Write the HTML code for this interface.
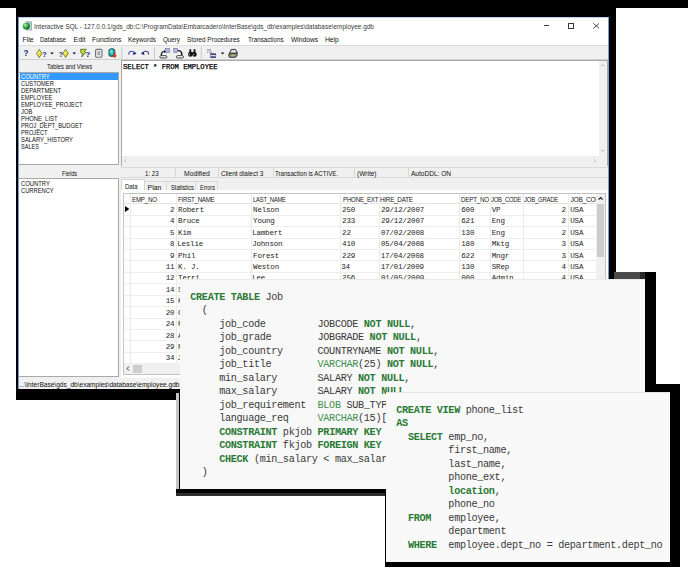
<!DOCTYPE html><html><head><meta charset="utf-8"><style>
*{margin:0;padding:0;box-sizing:border-box}
html,body{width:688px;height:580px;overflow:hidden;background:#fff}
body{position:relative;font-family:"Liberation Sans",sans-serif}
div,svg{position:absolute}
.t{white-space:pre;line-height:1}
.code{font-family:"Liberation Mono",monospace;white-space:pre;line-height:13.5px;color:#3a3a3a}
.k{color:#2a7a36;font-weight:bold}
.g{color:#3f8f4f}
</style></head><body>
<div style="left:0.00px;top:0.00px;width:688.00px;height:8.00px;background:#000"></div>
<div style="left:16.00px;top:0.00px;width:600.00px;height:400.00px;background:#000"></div>
<div style="left:18.00px;top:17.00px;width:591.00px;height:372.00px;background:#f0f0f0"></div>
<div style="left:18.00px;top:17.00px;width:591.00px;height:1.20px;background:#b9d1ee"></div>
<div style="left:18.00px;top:17.00px;width:1.00px;height:372.00px;background:#6f9fd8"></div>
<div style="left:608.00px;top:17.00px;width:1.00px;height:372.00px;background:#6f9fd8"></div>
<div style="left:18.00px;top:388.40px;width:591.00px;height:1.00px;background:#6f9fd8"></div>
<div style="left:19.00px;top:18.20px;width:589.00px;height:15.00px;background:#fff"></div>
<svg style="left:22px;top:21px" width="11" height="10" viewBox="0 0 11 10"><defs><radialGradient id="gb" cx="0.35" cy="0.35" r="0.7"><stop offset="0" stop-color="#b8f0b8"/><stop offset="0.55" stop-color="#2aa83a"/><stop offset="1" stop-color="#0d5e18"/></radialGradient></defs><rect x="4.5" y="0.8" width="5" height="8.2" fill="#c9d6e2" stroke="#7f93a6" stroke-width="0.7"/><rect x="5.6" y="2.5" width="2.8" height="0.7" fill="#7f93a6"/><rect x="5.6" y="4.5" width="2.8" height="0.7" fill="#7f93a6"/><circle cx="4.3" cy="5" r="3.6" fill="url(#gb)"/></svg>
<div id="t0" class="t" style="left:34.10px;top:23.08px;font-family:'Liberation Sans',sans-serif;font-size:7px;color:#3a3a3a;;transform:scaleX(0.9181);transform-origin:0 0;">Interactive SQL - 127.0.0.1/gds_db:C:\ProgramData\Embarcadero\InterBase\gds_db\examples\database\employee.gdb</div>
<div style="left:543.80px;top:25.40px;width:5.60px;height:0.95px;background:#3a3a3a"></div>
<div style="left:568.00px;top:23.20px;width:5.80px;height:5.40px;border:0.9px solid #3a3a3a"></div>
<svg style="left:592.6px;top:23.2px" width="6.6" height="5.8" viewBox="0 0 6.6 5.8"><path d="M0.3 0.3L6.3 5.5M6.3 0.3L0.3 5.5" stroke="#3a3a3a" stroke-width="0.9"/></svg>
<div style="left:19.00px;top:33.00px;width:589.00px;height:12.50px;background:#fff"></div>
<div id="t1" class="t" style="left:22.50px;top:37.25px;font-family:'Liberation Sans',sans-serif;font-size:6.8px;color:#111;;">File</div>
<div id="t2" class="t" style="left:40.00px;top:37.25px;font-family:'Liberation Sans',sans-serif;font-size:6.8px;color:#111;;transform:scaleX(0.8897);transform-origin:0 0;">Database</div>
<div id="t3" class="t" style="left:73.60px;top:37.25px;font-family:'Liberation Sans',sans-serif;font-size:6.8px;color:#111;;">Edit</div>
<div id="t4" class="t" style="left:92.00px;top:37.25px;font-family:'Liberation Sans',sans-serif;font-size:6.8px;color:#111;;">Functions</div>
<div id="t5" class="t" style="left:127.70px;top:37.25px;font-family:'Liberation Sans',sans-serif;font-size:6.8px;color:#111;;transform:scaleX(0.9333);transform-origin:0 0;">Keywords</div>
<div id="t6" class="t" style="left:162.90px;top:37.25px;font-family:'Liberation Sans',sans-serif;font-size:6.8px;color:#111;;transform:scaleX(0.9158);transform-origin:0 0;">Query</div>
<div id="t7" class="t" style="left:187.40px;top:37.25px;font-family:'Liberation Sans',sans-serif;font-size:6.8px;color:#111;;transform:scaleX(0.9289);transform-origin:0 0;">Stored Procedures</div>
<div id="t8" class="t" style="left:247.90px;top:37.25px;font-family:'Liberation Sans',sans-serif;font-size:6.8px;color:#111;;transform:scaleX(0.9205);transform-origin:0 0;">Transactions</div>
<div id="t9" class="t" style="left:291.40px;top:37.25px;font-family:'Liberation Sans',sans-serif;font-size:6.8px;color:#111;;transform:scaleX(0.9866);transform-origin:0 0;">Windows</div>
<div id="t10" class="t" style="left:325.40px;top:37.25px;font-family:'Liberation Sans',sans-serif;font-size:6.8px;color:#111;;transform:scaleX(0.9923);transform-origin:0 0;">Help</div>
<div style="left:19.00px;top:45.30px;width:589.00px;height:14.50px;background:#f0f0f0"></div>
<div style="left:19.00px;top:45.30px;width:589.00px;height:0.90px;background:#dcdcdc"></div>
<div style="left:19.00px;top:59.00px;width:589.00px;height:1.00px;background:#cfcfcf"></div>
<svg style="left:0;top:0" width="250" height="62" viewBox="0 0 250 62">
<defs>
<linearGradient id="ylw" x1="0" y1="0" x2="1" y2="1"><stop offset="0" stop-color="#ffff80"/><stop offset="1" stop-color="#d8d000"/></linearGradient>
<radialGradient id="teal" cx="0.4" cy="0.4" r="0.7"><stop offset="0" stop-color="#7ff0f0"/><stop offset="0.6" stop-color="#18a8a8"/><stop offset="1" stop-color="#0a5050"/></radialGradient>
</defs>
<!-- 1: help ? -->
<text x="23.6" y="55.8" font-family="Liberation Sans" font-weight="bold" font-size="8.2" fill="#1c2878">?</text>
<!-- 2: diamond + ? -->
<path d="M39.2 49.3L41.9 53.5L39.2 57.7L36.5 53.5Z" fill="url(#ylw)" stroke="#3a3a20" stroke-width="0.6"/>
<text x="42.3" y="56.5" font-family="Liberation Sans" font-weight="bold" font-size="7.2" fill="#1c2878">?</text>
<!-- 3: dropdown -->
<path d="M50.3 52.4L53.8 52.4L52.05 54.4Z" fill="#111"/>
<!-- 4: ? + diamond -->
<text x="58.8" y="56.5" font-family="Liberation Sans" font-weight="bold" font-size="7.2" fill="#1c2878">?</text>
<path d="M65.6 49.2L68.3 53.4L65.6 57.6L62.9 53.4Z" fill="url(#ylw)" stroke="#3a3a20" stroke-width="0.6"/>
<!-- 5: dropdown -->
<path d="M72.5 52.4L76 52.4L74.25 54.4Z" fill="#111"/>
<!-- 6: lightning + ? -->
<path d="M80.6 49.3L86.4 49.3L84.2 51.6L85.8 52.3L81.8 56.8L82.6 53.6L80.9 52.8Z" fill="#d0e020" stroke="#24502a" stroke-width="0.7"/>
<text x="85.6" y="56.8" font-family="Liberation Sans" font-weight="bold" font-size="7.8" fill="#1c2878">?</text>
<!-- 7: doc -->
<rect x="95.6" y="49.4" width="6.4" height="7.8" rx="1.3" fill="#f6f6f6" stroke="#6e6e6e" stroke-width="1.1"/>
<rect x="97.3" y="51.1" width="3" height="4.2" fill="#a8a8a8"/>
<!-- 8: db + red arrow -->
<path d="M108.9 50.2Q109.2 48.6 111.8 48.6Q114.6 48.6 114.8 50.2L114.8 55Q114.6 56.5 111.8 56.5Q109.2 56.5 108.9 55Z" fill="url(#teal)" stroke="#1a3535" stroke-width="0.7"/>
<path d="M113.9 52.2L115.5 52.2L115.5 55.3L116.9 55.3L114.7 58.3L112.5 55.3L113.9 55.3Z" fill="#d83a20"/>
<!-- sep -->
<rect x="121.4" y="47.3" width="0.9" height="11.5" fill="#c4c4c4"/>
<!-- 10: redo -->
<path d="M128.8 54.6Q128.6 50.8 132.2 51.3Q133.8 51.7 134.4 53.3" fill="none" stroke="#3a4a9a" stroke-width="1.1"/>
<path d="M133.2 54.6L135.9 53.6L134.6 52.1Z" fill="#101060" stroke="#101060" stroke-width="0.6"/>
<!-- 11: undo -->
<path d="M148.6 54.6Q148.8 50.8 145.2 51.3Q143.6 51.7 143 53.3" fill="none" stroke="#3a4a9a" stroke-width="1.1"/>
<path d="M144.2 54.6L141.5 53.6L142.8 52.1Z" fill="#101060" stroke="#101060" stroke-width="0.6"/>
<!-- sep -->
<rect x="154.1" y="47.3" width="0.9" height="11.5" fill="#c4c4c4"/>
<!-- 13: export -->
<rect x="165.6" y="48.6" width="3.9" height="3.9" fill="#b4b4ec" stroke="#5a5a7a" stroke-width="0.5"/>
<path d="M161.4 55.5Q161.1 51.6 164.4 51.5" fill="none" stroke="#111" stroke-width="1.2"/>
<path d="M164 50.1L165.9 51.5L164 52.9Z" fill="#111"/>
<rect x="159.9" y="55.7" width="6.9" height="2.3" rx="0.9" fill="#fff" stroke="#111" stroke-width="0.8"/>
<!-- 14: import -->
<rect x="173.8" y="48.6" width="3.9" height="3.9" fill="#b4b4ec" stroke="#5a5a7a" stroke-width="0.5"/>
<path d="M177.8 50.7Q181.9 50.6 181.7 54" fill="none" stroke="#111" stroke-width="1.2"/>
<path d="M180.3 53.7L183.1 53.7L181.7 55.5Z" fill="#111"/>
<rect x="176.4" y="55.7" width="7" height="2.3" rx="0.9" fill="#fff" stroke="#111" stroke-width="0.8"/>
<!-- 15: binoculars -->
<ellipse cx="190.3" cy="54.4" rx="2.2" ry="2.4" fill="#111"/>
<ellipse cx="194.5" cy="54.4" rx="2.2" ry="2.4" fill="#111"/>
<rect x="189.4" y="49.3" width="1.8" height="4.5" fill="#111"/>
<rect x="193.6" y="49.3" width="1.8" height="4.5" fill="#111"/>
<rect x="191" y="52.2" width="2.8" height="2.6" fill="#111"/>
<circle cx="189.6" cy="54.6" r="0.6" fill="#ddd"/>
<circle cx="193.8" cy="54.6" r="0.6" fill="#ddd"/>
<!-- sep -->
<rect x="200.8" y="47.3" width="0.9" height="11.5" fill="#c4c4c4"/>
<!-- 17: list -->
<rect x="207" y="49.5" width="4" height="0.8" fill="#666"/>
<rect x="207" y="51.7" width="1.2" height="0.8" fill="#666"/>
<rect x="209" y="51.7" width="3" height="0.8" fill="#666"/>
<rect x="210.3" y="53.3" width="5.6" height="1.6" fill="#2a3a8a"/>
<rect x="210.3" y="55" width="5.6" height="1.3" fill="#fff" stroke="#555" stroke-width="0.4"/>
<rect x="210.3" y="56.5" width="5.6" height="1.4" fill="#2a3a8a"/>
<!-- 18: dropdown -->
<path d="M220.8 52.4L224.3 52.4L222.55 54.4Z" fill="#111"/>
<!-- 19: printer -->
<path d="M229.2 53.8L231.2 49.6L235.2 49.2L237.4 52.4L236.9 56.2Q235.8 57.7 232.6 57.5L229.3 57.2L228.6 55Z" fill="#8c8c8c" stroke="#222" stroke-width="0.8"/>
<path d="M231.6 50.2L235 49.9L236.2 52.2L230.6 52.6Z" fill="#e8e8e8"/>
<path d="M229 53.6L237 53.2" stroke="#222" stroke-width="0.8"/>
<rect x="231.8" y="55" width="2.8" height="1" fill="#c8d010"/>
</svg>

<div style="left:19.00px;top:60.00px;width:100.50px;height:12.00px;background:#f0f0f0"></div>
<div id="t11" class="t" style="left:46.50px;top:63.50px;font-family:'Liberation Sans',sans-serif;font-size:6.5px;color:#111;;transform:scaleX(0.8960);transform-origin:0 0;">Tables and Views</div>
<div style="left:19.00px;top:71.60px;width:100.00px;height:93.80px;background:#fff;border:1px solid #a9a9a9;border-left:none"></div>
<div style="left:19.80px;top:72.80px;width:98.40px;height:6.90px;background:#3399ff"></div>
<div id="t12" class="t" style="left:20.80px;top:73.50px;font-family:'Liberation Sans',sans-serif;font-size:6.5px;color:#fff;;transform:scaleX(0.8937);transform-origin:0 0;">COUNTRY</div>
<div id="t13" class="t" style="left:20.80px;top:80.50px;font-family:'Liberation Sans',sans-serif;font-size:6.5px;color:#111;;transform:scaleX(0.8865);transform-origin:0 0;">CUSTOMER</div>
<div id="t14" class="t" style="left:20.80px;top:87.50px;font-family:'Liberation Sans',sans-serif;font-size:6.5px;color:#111;;transform:scaleX(0.9091);transform-origin:0 0;">DEPARTMENT</div>
<div id="t15" class="t" style="left:20.80px;top:94.50px;font-family:'Liberation Sans',sans-serif;font-size:6.5px;color:#111;;transform:scaleX(0.8771);transform-origin:0 0;">EMPLOYEE</div>
<div id="t16" class="t" style="left:20.80px;top:101.50px;font-family:'Liberation Sans',sans-serif;font-size:6.5px;color:#111;;transform:scaleX(0.8826);transform-origin:0 0;">EMPLOYEE_PROJECT</div>
<div id="t17" class="t" style="left:20.80px;top:108.50px;font-family:'Liberation Sans',sans-serif;font-size:6.5px;color:#111;;transform:scaleX(0.8917);transform-origin:0 0;">JOB</div>
<div id="t18" class="t" style="left:20.80px;top:115.50px;font-family:'Liberation Sans',sans-serif;font-size:6.5px;color:#111;;transform:scaleX(0.9025);transform-origin:0 0;">PHONE_LIST</div>
<div id="t19" class="t" style="left:20.80px;top:122.50px;font-family:'Liberation Sans',sans-serif;font-size:6.5px;color:#111;;transform:scaleX(0.8884);transform-origin:0 0;">PROJ_DEPT_BUDGET</div>
<div id="t20" class="t" style="left:20.80px;top:129.50px;font-family:'Liberation Sans',sans-serif;font-size:6.5px;color:#111;;transform:scaleX(0.8733);transform-origin:0 0;">PROJECT</div>
<div id="t21" class="t" style="left:20.80px;top:136.50px;font-family:'Liberation Sans',sans-serif;font-size:6.5px;color:#111;;transform:scaleX(0.8983);transform-origin:0 0;">SALARY_HISTORY</div>
<div id="t22" class="t" style="left:20.80px;top:143.50px;font-family:'Liberation Sans',sans-serif;font-size:6.5px;color:#111;;transform:scaleX(0.8524);transform-origin:0 0;">SALES</div>
<div id="t23" class="t" style="left:61.60px;top:170.50px;font-family:'Liberation Sans',sans-serif;font-size:6.5px;color:#111;;transform:scaleX(0.8765);transform-origin:0 0;">Fields</div>
<div style="left:19.00px;top:177.90px;width:100.00px;height:199.50px;background:#fff;border:1px solid #a9a9a9;border-left:none"></div>
<div id="t24" class="t" style="left:20.80px;top:180.50px;font-family:'Liberation Sans',sans-serif;font-size:6.5px;color:#111;;transform:scaleX(0.9000);transform-origin:0 0;">COUNTRY</div>
<div id="t25" class="t" style="left:20.80px;top:187.50px;font-family:'Liberation Sans',sans-serif;font-size:6.5px;color:#111;;transform:scaleX(0.8865);transform-origin:0 0;">CURRENCY</div>
<div style="left:120.60px;top:60.20px;width:487.60px;height:106.00px;background:#fff;border:1px solid #a9a9a9"></div>
<div id="t26" class="t" style="left:122.90px;top:64.33px;font-family:'Liberation Mono',monospace;font-size:7.4px;color:#000;-webkit-text-stroke:0.25px #000;transform:scaleX(0.9692);transform-origin:0 0;">SELECT * FROM EMPLOYEE</div>
<div style="left:599.40px;top:61.20px;width:7.40px;height:95.00px;background:#f0f0f0"></div>
<div style="left:121.60px;top:156.20px;width:477.80px;height:9.60px;background:#f0f0f0"></div>
<div style="left:599.40px;top:156.20px;width:7.40px;height:9.60px;background:#f0f0f0"></div>
<svg style="left:599.4px;top:61.2px" width="7.4" height="95" viewBox="0 0 7.4 95"><path d="M2.2 5L3.7 3.5L5.2 5M2.2 89L3.7 90.5L5.2 89" fill="none" stroke="#9a9a9a" stroke-width="0.7"/></svg>
<svg style="left:121.6px;top:156.2px" width="478" height="9.6" viewBox="0 0 478 9.6"><path d="M4 3.3L2.5 4.8L4 6.3M472 3.3L473.5 4.8L472 6.3" fill="none" stroke="#9a9a9a" stroke-width="0.7"/></svg>
<div style="left:120.00px;top:166.50px;width:488.00px;height:11.50px;background:#f0f0f0"></div>
<div style="left:120.00px;top:167.30px;width:488.00px;height:0.80px;background:#dadada"></div>
<div style="left:120.00px;top:177.20px;width:488.00px;height:0.80px;background:#dadada"></div>
<div style="left:175.00px;top:168.00px;width:0.80px;height:9.20px;background:#d6d6d6"></div>
<div style="left:218.20px;top:168.00px;width:0.80px;height:9.20px;background:#d6d6d6"></div>
<div style="left:272.70px;top:168.00px;width:0.80px;height:9.20px;background:#d6d6d6"></div>
<div style="left:354.00px;top:168.00px;width:0.80px;height:9.20px;background:#d6d6d6"></div>
<div style="left:408.10px;top:168.00px;width:0.80px;height:9.20px;background:#d6d6d6"></div>
<div id="t27" class="t" style="left:145.40px;top:171.25px;font-family:'Liberation Sans',sans-serif;font-size:6.8px;color:#111;;transform:scaleX(0.8961);transform-origin:0 0;">1: 23</div>
<div id="t28" class="t" style="left:184.00px;top:171.25px;font-family:'Liberation Sans',sans-serif;font-size:6.8px;color:#111;;">Modified</div>
<div id="t29" class="t" style="left:220.80px;top:171.25px;font-family:'Liberation Sans',sans-serif;font-size:6.8px;color:#111;;transform:scaleX(0.9502);transform-origin:0 0;">Client dialect 3</div>
<div id="t30" class="t" style="left:275.30px;top:171.25px;font-family:'Liberation Sans',sans-serif;font-size:6.8px;color:#111;;transform:scaleX(0.9016);transform-origin:0 0;">Transaction is ACTIVE.</div>
<div id="t31" class="t" style="left:357.00px;top:171.25px;font-family:'Liberation Sans',sans-serif;font-size:6.8px;color:#111;;transform:scaleX(0.9650);transform-origin:0 0;">(Write)</div>
<div id="t32" class="t" style="left:410.50px;top:171.25px;font-family:'Liberation Sans',sans-serif;font-size:6.8px;color:#111;;transform:scaleX(0.9634);transform-origin:0 0;">AutoDDL: ON</div>
<div style="left:120.00px;top:178.00px;width:488.00px;height:12.50px;background:#f0f0f0"></div>
<div style="left:121.00px;top:179.30px;width:24.00px;height:11.50px;background:#fff;border:0.8px solid #d4d4d4;border-bottom:none"></div>
<div style="left:145.00px;top:180.60px;width:21.50px;height:9.60px;background:#f0f0f0;border:0.8px solid #d9d9d9;border-left:none;border-bottom:none"></div>
<div style="left:166.50px;top:180.60px;width:29.00px;height:9.60px;background:#f0f0f0;border:0.8px solid #d9d9d9;border-left:none;border-bottom:none"></div>
<div style="left:195.50px;top:180.60px;width:22.70px;height:9.60px;background:#f0f0f0;border:0.8px solid #d9d9d9;border-left:none;border-bottom:none"></div>
<div id="t33" class="t" style="left:125.10px;top:184.25px;font-family:'Liberation Sans',sans-serif;font-size:6.8px;color:#111;;transform:scaleX(0.8733);transform-origin:0 0;">Data</div>
<div id="t34" class="t" style="left:147.60px;top:185.25px;font-family:'Liberation Sans',sans-serif;font-size:6.8px;color:#111;;">Plan</div>
<div id="t35" class="t" style="left:170.60px;top:185.25px;font-family:'Liberation Sans',sans-serif;font-size:6.8px;color:#111;;transform:scaleX(0.8444);transform-origin:0 0;">Statistics</div>
<div id="t36" class="t" style="left:200.00px;top:185.25px;font-family:'Liberation Sans',sans-serif;font-size:6.8px;color:#111;;transform:scaleX(0.8056);transform-origin:0 0;">Errors</div>
<div style="left:120.50px;top:190.00px;width:487.50px;height:188.00px;background:#fff"></div>
<div style="left:122.80px;top:193.20px;width:483.20px;height:181.50px;background:#fff;border:0.9px solid #c4c4c4"></div>
<div style="left:123.50px;top:203.30px;width:473.00px;height:0.90px;background:#e4e4e4"></div>
<div style="left:123.50px;top:214.81px;width:473.00px;height:0.90px;background:#eeeeee"></div>
<div style="left:123.50px;top:226.22px;width:473.00px;height:0.90px;background:#eeeeee"></div>
<div style="left:123.50px;top:237.63px;width:473.00px;height:0.90px;background:#eeeeee"></div>
<div style="left:123.50px;top:249.04px;width:473.00px;height:0.90px;background:#eeeeee"></div>
<div style="left:123.50px;top:260.45px;width:473.00px;height:0.90px;background:#eeeeee"></div>
<div style="left:123.50px;top:271.86px;width:473.00px;height:0.90px;background:#eeeeee"></div>
<div style="left:123.50px;top:283.27px;width:473.00px;height:0.90px;background:#eeeeee"></div>
<div style="left:123.50px;top:294.68px;width:473.00px;height:0.90px;background:#eeeeee"></div>
<div style="left:123.50px;top:306.09px;width:473.00px;height:0.90px;background:#eeeeee"></div>
<div style="left:123.50px;top:317.50px;width:473.00px;height:0.90px;background:#eeeeee"></div>
<div style="left:123.50px;top:328.91px;width:473.00px;height:0.90px;background:#eeeeee"></div>
<div style="left:123.50px;top:340.32px;width:473.00px;height:0.90px;background:#eeeeee"></div>
<div style="left:123.50px;top:351.73px;width:473.00px;height:0.90px;background:#eeeeee"></div>
<div style="left:123.50px;top:363.14px;width:473.00px;height:0.90px;background:#eeeeee"></div>
<div style="left:130.10px;top:193.50px;width:0.80px;height:170.00px;background:#ebebeb"></div>
<div style="left:175.80px;top:193.50px;width:0.80px;height:170.00px;background:#ebebeb"></div>
<div style="left:250.80px;top:193.50px;width:0.80px;height:170.00px;background:#ebebeb"></div>
<div style="left:339.80px;top:193.50px;width:0.80px;height:170.00px;background:#ebebeb"></div>
<div style="left:378.60px;top:193.50px;width:0.80px;height:170.00px;background:#ebebeb"></div>
<div style="left:459.00px;top:193.50px;width:0.80px;height:170.00px;background:#ebebeb"></div>
<div style="left:489.50px;top:193.50px;width:0.80px;height:170.00px;background:#ebebeb"></div>
<div style="left:522.60px;top:193.50px;width:0.80px;height:170.00px;background:#ebebeb"></div>
<div style="left:568.00px;top:193.50px;width:0.80px;height:170.00px;background:#ebebeb"></div>
<div style="left:123.3px;top:193.5px;width:473.3px;height:169.5px;overflow:hidden">
<div id="t37" class="t" style="left:8.30px;top:3.92px;font-family:'Liberation Sans',sans-serif;font-size:6.6px;color:#222;letter-spacing:-0.25px;transform:scaleX(0.9385);transform-origin:0 0;">EMP_NO</div>
<div id="t38" class="t" style="left:54.60px;top:3.92px;font-family:'Liberation Sans',sans-serif;font-size:6.6px;color:#222;letter-spacing:-0.25px;transform:scaleX(0.9256);transform-origin:0 0;">FIRST_NAME</div>
<div id="t39" class="t" style="left:129.50px;top:3.92px;font-family:'Liberation Sans',sans-serif;font-size:6.6px;color:#222;letter-spacing:-0.25px;transform:scaleX(0.8873);transform-origin:0 0;">LAST_NAME</div>
<div id="t40" class="t" style="left:219.30px;top:3.92px;font-family:'Liberation Sans',sans-serif;font-size:6.6px;color:#222;letter-spacing:-0.25px;transform:scaleX(0.9351);transform-origin:0 0;">PHONE_EXT</div>
<div id="t41" class="t" style="left:257.20px;top:3.92px;font-family:'Liberation Sans',sans-serif;font-size:6.6px;color:#222;letter-spacing:-0.25px;transform:scaleX(0.9559);transform-origin:0 0;">HIRE_DATE</div>
<div id="t42" class="t" style="left:337.80px;top:3.92px;font-family:'Liberation Sans',sans-serif;font-size:6.6px;color:#222;letter-spacing:-0.25px;transform:scaleX(0.9473);transform-origin:0 0;">DEPT_NO</div>
<div id="t43" class="t" style="left:367.70px;top:3.92px;font-family:'Liberation Sans',sans-serif;font-size:6.6px;color:#222;letter-spacing:-0.25px;transform:scaleX(0.8971);transform-origin:0 0;">JOB_CODE</div>
<div id="t44" class="t" style="left:401.00px;top:3.92px;font-family:'Liberation Sans',sans-serif;font-size:6.6px;color:#222;letter-spacing:-0.25px;transform:scaleX(0.9026);transform-origin:0 0;">JOB_GRADE</div>
<div id="t45" class="t" style="left:447.20px;top:3.92px;font-family:'Liberation Sans',sans-serif;font-size:6.6px;color:#222;letter-spacing:-0.25px;">JOB_COUNTRY</div>
<div id="t46" class="t" style="left:46.69px;top:13.75px;font-family:'Liberation Mono',monospace;font-size:7.5px;color:#1e1e1e;letter-spacing:-0.19px;">2</div>
<div id="t47" class="t" style="left:54.80px;top:13.75px;font-family:'Liberation Mono',monospace;font-size:7.5px;color:#1e1e1e;letter-spacing:-0.19px;">Robert</div>
<div id="t48" class="t" style="left:129.80px;top:13.75px;font-family:'Liberation Mono',monospace;font-size:7.5px;color:#1e1e1e;letter-spacing:-0.19px;">Nelson</div>
<div id="t49" class="t" style="left:218.80px;top:13.75px;font-family:'Liberation Mono',monospace;font-size:7.5px;color:#1e1e1e;letter-spacing:-0.19px;">250</div>
<div id="t50" class="t" style="left:257.60px;top:13.75px;font-family:'Liberation Mono',monospace;font-size:7.5px;color:#1e1e1e;letter-spacing:-0.19px;">29/12/2007</div>
<div id="t51" class="t" style="left:338.00px;top:13.75px;font-family:'Liberation Mono',monospace;font-size:7.5px;color:#1e1e1e;letter-spacing:-0.19px;">600</div>
<div id="t52" class="t" style="left:368.50px;top:13.75px;font-family:'Liberation Mono',monospace;font-size:7.5px;color:#1e1e1e;letter-spacing:-0.19px;">VP</div>
<div id="t53" class="t" style="left:438.08px;top:13.75px;font-family:'Liberation Mono',monospace;font-size:7.5px;color:#1e1e1e;letter-spacing:-0.19px;">2</div>
<div id="t54" class="t" style="left:447.00px;top:13.75px;font-family:'Liberation Mono',monospace;font-size:7.5px;color:#1e1e1e;letter-spacing:-0.19px;">USA</div>
<div id="t55" class="t" style="left:46.69px;top:24.75px;font-family:'Liberation Mono',monospace;font-size:7.5px;color:#1e1e1e;letter-spacing:-0.19px;">4</div>
<div id="t56" class="t" style="left:54.80px;top:24.75px;font-family:'Liberation Mono',monospace;font-size:7.5px;color:#1e1e1e;letter-spacing:-0.19px;">Bruce</div>
<div id="t57" class="t" style="left:129.80px;top:24.75px;font-family:'Liberation Mono',monospace;font-size:7.5px;color:#1e1e1e;letter-spacing:-0.19px;">Young</div>
<div id="t58" class="t" style="left:218.80px;top:24.75px;font-family:'Liberation Mono',monospace;font-size:7.5px;color:#1e1e1e;letter-spacing:-0.19px;">233</div>
<div id="t59" class="t" style="left:257.60px;top:24.75px;font-family:'Liberation Mono',monospace;font-size:7.5px;color:#1e1e1e;letter-spacing:-0.19px;">29/12/2007</div>
<div id="t60" class="t" style="left:338.00px;top:24.75px;font-family:'Liberation Mono',monospace;font-size:7.5px;color:#1e1e1e;letter-spacing:-0.19px;">621</div>
<div id="t61" class="t" style="left:368.50px;top:24.75px;font-family:'Liberation Mono',monospace;font-size:7.5px;color:#1e1e1e;letter-spacing:-0.19px;">Eng</div>
<div id="t62" class="t" style="left:438.08px;top:24.75px;font-family:'Liberation Mono',monospace;font-size:7.5px;color:#1e1e1e;letter-spacing:-0.19px;">2</div>
<div id="t63" class="t" style="left:447.00px;top:24.75px;font-family:'Liberation Mono',monospace;font-size:7.5px;color:#1e1e1e;letter-spacing:-0.19px;">USA</div>
<div id="t64" class="t" style="left:46.69px;top:36.76px;font-family:'Liberation Mono',monospace;font-size:7.5px;color:#1e1e1e;letter-spacing:-0.19px;">5</div>
<div id="t65" class="t" style="left:54.80px;top:36.76px;font-family:'Liberation Mono',monospace;font-size:7.5px;color:#1e1e1e;letter-spacing:-0.19px;">Kim</div>
<div id="t66" class="t" style="left:128.90px;top:36.76px;font-family:'Liberation Mono',monospace;font-size:7.5px;color:#1e1e1e;letter-spacing:-0.19px;">Lambert</div>
<div id="t67" class="t" style="left:218.80px;top:36.76px;font-family:'Liberation Mono',monospace;font-size:7.5px;color:#1e1e1e;letter-spacing:-0.19px;">22</div>
<div id="t68" class="t" style="left:257.60px;top:36.76px;font-family:'Liberation Mono',monospace;font-size:7.5px;color:#1e1e1e;letter-spacing:-0.19px;">07/02/2008</div>
<div id="t69" class="t" style="left:338.00px;top:36.76px;font-family:'Liberation Mono',monospace;font-size:7.5px;color:#1e1e1e;letter-spacing:-0.19px;">130</div>
<div id="t70" class="t" style="left:368.50px;top:36.76px;font-family:'Liberation Mono',monospace;font-size:7.5px;color:#1e1e1e;letter-spacing:-0.19px;">Eng</div>
<div id="t71" class="t" style="left:438.08px;top:36.76px;font-family:'Liberation Mono',monospace;font-size:7.5px;color:#1e1e1e;letter-spacing:-0.19px;">2</div>
<div id="t72" class="t" style="left:447.00px;top:36.76px;font-family:'Liberation Mono',monospace;font-size:7.5px;color:#1e1e1e;letter-spacing:-0.19px;">USA</div>
<div id="t73" class="t" style="left:46.69px;top:47.76px;font-family:'Liberation Mono',monospace;font-size:7.5px;color:#1e1e1e;letter-spacing:-0.19px;">8</div>
<div id="t74" class="t" style="left:53.90px;top:47.76px;font-family:'Liberation Mono',monospace;font-size:7.5px;color:#1e1e1e;letter-spacing:-0.19px;">Leslie</div>
<div id="t75" class="t" style="left:128.90px;top:47.76px;font-family:'Liberation Mono',monospace;font-size:7.5px;color:#1e1e1e;letter-spacing:-0.19px;">Johnson</div>
<div id="t76" class="t" style="left:218.80px;top:47.76px;font-family:'Liberation Mono',monospace;font-size:7.5px;color:#1e1e1e;letter-spacing:-0.19px;">410</div>
<div id="t77" class="t" style="left:257.60px;top:47.76px;font-family:'Liberation Mono',monospace;font-size:7.5px;color:#1e1e1e;letter-spacing:-0.19px;">05/04/2008</div>
<div id="t78" class="t" style="left:338.00px;top:47.76px;font-family:'Liberation Mono',monospace;font-size:7.5px;color:#1e1e1e;letter-spacing:-0.19px;">180</div>
<div id="t79" class="t" style="left:368.50px;top:47.76px;font-family:'Liberation Mono',monospace;font-size:7.5px;color:#1e1e1e;letter-spacing:-0.19px;">Mktg</div>
<div id="t80" class="t" style="left:438.08px;top:47.76px;font-family:'Liberation Mono',monospace;font-size:7.5px;color:#1e1e1e;letter-spacing:-0.19px;">3</div>
<div id="t81" class="t" style="left:447.00px;top:47.76px;font-family:'Liberation Mono',monospace;font-size:7.5px;color:#1e1e1e;letter-spacing:-0.19px;">USA</div>
<div id="t82" class="t" style="left:46.69px;top:59.76px;font-family:'Liberation Mono',monospace;font-size:7.5px;color:#1e1e1e;letter-spacing:-0.19px;">9</div>
<div id="t83" class="t" style="left:54.80px;top:59.76px;font-family:'Liberation Mono',monospace;font-size:7.5px;color:#1e1e1e;letter-spacing:-0.19px;">Phil</div>
<div id="t84" class="t" style="left:129.80px;top:59.76px;font-family:'Liberation Mono',monospace;font-size:7.5px;color:#1e1e1e;letter-spacing:-0.19px;">Forest</div>
<div id="t85" class="t" style="left:218.80px;top:59.76px;font-family:'Liberation Mono',monospace;font-size:7.5px;color:#1e1e1e;letter-spacing:-0.19px;">229</div>
<div id="t86" class="t" style="left:257.40px;top:59.76px;font-family:'Liberation Mono',monospace;font-size:7.5px;color:#1e1e1e;letter-spacing:-0.19px;">17/04/2008</div>
<div id="t87" class="t" style="left:338.00px;top:59.76px;font-family:'Liberation Mono',monospace;font-size:7.5px;color:#1e1e1e;letter-spacing:-0.19px;">622</div>
<div id="t88" class="t" style="left:368.50px;top:59.76px;font-family:'Liberation Mono',monospace;font-size:7.5px;color:#1e1e1e;letter-spacing:-0.19px;">Mngr</div>
<div id="t89" class="t" style="left:438.08px;top:59.76px;font-family:'Liberation Mono',monospace;font-size:7.5px;color:#1e1e1e;letter-spacing:-0.19px;">3</div>
<div id="t90" class="t" style="left:447.00px;top:59.76px;font-family:'Liberation Mono',monospace;font-size:7.5px;color:#1e1e1e;letter-spacing:-0.19px;">USA</div>
<div id="t91" class="t" style="left:42.38px;top:70.75px;font-family:'Liberation Mono',monospace;font-size:7.5px;color:#1e1e1e;letter-spacing:-0.19px;">11</div>
<div id="t92" class="t" style="left:54.80px;top:70.75px;font-family:'Liberation Mono',monospace;font-size:7.5px;color:#1e1e1e;letter-spacing:-0.19px;">K. J.</div>
<div id="t93" class="t" style="left:129.80px;top:70.75px;font-family:'Liberation Mono',monospace;font-size:7.5px;color:#1e1e1e;letter-spacing:-0.19px;">Weston</div>
<div id="t94" class="t" style="left:217.90px;top:70.75px;font-family:'Liberation Mono',monospace;font-size:7.5px;color:#1e1e1e;letter-spacing:-0.19px;">34</div>
<div id="t95" class="t" style="left:257.40px;top:70.75px;font-family:'Liberation Mono',monospace;font-size:7.5px;color:#1e1e1e;letter-spacing:-0.19px;">17/01/2009</div>
<div id="t96" class="t" style="left:338.00px;top:70.75px;font-family:'Liberation Mono',monospace;font-size:7.5px;color:#1e1e1e;letter-spacing:-0.19px;">130</div>
<div id="t97" class="t" style="left:368.50px;top:70.75px;font-family:'Liberation Mono',monospace;font-size:7.5px;color:#1e1e1e;letter-spacing:-0.19px;">SRep</div>
<div id="t98" class="t" style="left:438.08px;top:70.75px;font-family:'Liberation Mono',monospace;font-size:7.5px;color:#1e1e1e;letter-spacing:-0.19px;">4</div>
<div id="t99" class="t" style="left:447.00px;top:70.75px;font-family:'Liberation Mono',monospace;font-size:7.5px;color:#1e1e1e;letter-spacing:-0.19px;">USA</div>
<div id="t100" class="t" style="left:42.38px;top:81.75px;font-family:'Liberation Mono',monospace;font-size:7.5px;color:#1e1e1e;letter-spacing:-0.19px;">12</div>
<div id="t101" class="t" style="left:54.80px;top:81.75px;font-family:'Liberation Mono',monospace;font-size:7.5px;color:#1e1e1e;letter-spacing:-0.19px;">Terri</div>
<div id="t102" class="t" style="left:128.90px;top:81.75px;font-family:'Liberation Mono',monospace;font-size:7.5px;color:#1e1e1e;letter-spacing:-0.19px;">Lee</div>
<div id="t103" class="t" style="left:218.80px;top:81.75px;font-family:'Liberation Mono',monospace;font-size:7.5px;color:#1e1e1e;letter-spacing:-0.19px;">256</div>
<div id="t104" class="t" style="left:257.60px;top:81.75px;font-family:'Liberation Mono',monospace;font-size:7.5px;color:#1e1e1e;letter-spacing:-0.19px;">01/05/2009</div>
<div id="t105" class="t" style="left:338.00px;top:81.75px;font-family:'Liberation Mono',monospace;font-size:7.5px;color:#1e1e1e;letter-spacing:-0.19px;">000</div>
<div id="t106" class="t" style="left:368.50px;top:81.75px;font-family:'Liberation Mono',monospace;font-size:7.5px;color:#1e1e1e;letter-spacing:-0.19px;">Admin</div>
<div id="t107" class="t" style="left:438.08px;top:81.75px;font-family:'Liberation Mono',monospace;font-size:7.5px;color:#1e1e1e;letter-spacing:-0.19px;">4</div>
<div id="t108" class="t" style="left:447.00px;top:81.75px;font-family:'Liberation Mono',monospace;font-size:7.5px;color:#1e1e1e;letter-spacing:-0.19px;">USA</div>
<div id="t109" class="t" style="left:42.38px;top:93.75px;font-family:'Liberation Mono',monospace;font-size:7.5px;color:#1e1e1e;letter-spacing:-0.19px;">14</div>
<div id="t110" class="t" style="left:54.80px;top:93.75px;font-family:'Liberation Mono',monospace;font-size:7.5px;color:#1e1e1e;letter-spacing:-0.19px;">Stewart</div>
<div id="t111" class="t" style="left:129.80px;top:93.75px;font-family:'Liberation Mono',monospace;font-size:7.5px;color:#1e1e1e;letter-spacing:-0.19px;">Hall</div>
<div id="t112" class="t" style="left:218.80px;top:93.75px;font-family:'Liberation Mono',monospace;font-size:7.5px;color:#1e1e1e;letter-spacing:-0.19px;">227</div>
<div id="t113" class="t" style="left:257.60px;top:93.75px;font-family:'Liberation Mono',monospace;font-size:7.5px;color:#1e1e1e;letter-spacing:-0.19px;">04/06/2009</div>
<div id="t114" class="t" style="left:338.00px;top:93.75px;font-family:'Liberation Mono',monospace;font-size:7.5px;color:#1e1e1e;letter-spacing:-0.19px;">900</div>
<div id="t115" class="t" style="left:368.50px;top:93.75px;font-family:'Liberation Mono',monospace;font-size:7.5px;color:#1e1e1e;letter-spacing:-0.19px;">Finan</div>
<div id="t116" class="t" style="left:438.08px;top:93.75px;font-family:'Liberation Mono',monospace;font-size:7.5px;color:#1e1e1e;letter-spacing:-0.19px;">3</div>
<div id="t117" class="t" style="left:447.00px;top:93.75px;font-family:'Liberation Mono',monospace;font-size:7.5px;color:#1e1e1e;letter-spacing:-0.19px;">USA</div>
<div id="t118" class="t" style="left:42.38px;top:104.75px;font-family:'Liberation Mono',monospace;font-size:7.5px;color:#1e1e1e;letter-spacing:-0.19px;">15</div>
<div id="t119" class="t" style="left:54.80px;top:104.75px;font-family:'Liberation Mono',monospace;font-size:7.5px;color:#1e1e1e;letter-spacing:-0.19px;">Katherine</div>
<div id="t120" class="t" style="left:129.80px;top:104.75px;font-family:'Liberation Mono',monospace;font-size:7.5px;color:#1e1e1e;letter-spacing:-0.19px;">Young</div>
<div id="t121" class="t" style="left:218.80px;top:104.75px;font-family:'Liberation Mono',monospace;font-size:7.5px;color:#1e1e1e;letter-spacing:-0.19px;">231</div>
<div id="t122" class="t" style="left:257.40px;top:104.75px;font-family:'Liberation Mono',monospace;font-size:7.5px;color:#1e1e1e;letter-spacing:-0.19px;">14/06/2009</div>
<div id="t123" class="t" style="left:338.00px;top:104.75px;font-family:'Liberation Mono',monospace;font-size:7.5px;color:#1e1e1e;letter-spacing:-0.19px;">623</div>
<div id="t124" class="t" style="left:368.50px;top:104.75px;font-family:'Liberation Mono',monospace;font-size:7.5px;color:#1e1e1e;letter-spacing:-0.19px;">Mngr</div>
<div id="t125" class="t" style="left:438.08px;top:104.75px;font-family:'Liberation Mono',monospace;font-size:7.5px;color:#1e1e1e;letter-spacing:-0.19px;">3</div>
<div id="t126" class="t" style="left:447.00px;top:104.75px;font-family:'Liberation Mono',monospace;font-size:7.5px;color:#1e1e1e;letter-spacing:-0.19px;">USA</div>
<div id="t127" class="t" style="left:42.38px;top:116.75px;font-family:'Liberation Mono',monospace;font-size:7.5px;color:#1e1e1e;letter-spacing:-0.19px;">20</div>
<div id="t128" class="t" style="left:54.80px;top:116.75px;font-family:'Liberation Mono',monospace;font-size:7.5px;color:#1e1e1e;letter-spacing:-0.19px;">Chris</div>
<div id="t129" class="t" style="left:129.80px;top:116.75px;font-family:'Liberation Mono',monospace;font-size:7.5px;color:#1e1e1e;letter-spacing:-0.19px;">Papadopoulos</div>
<div id="t130" class="t" style="left:218.80px;top:116.75px;font-family:'Liberation Mono',monospace;font-size:7.5px;color:#1e1e1e;letter-spacing:-0.19px;">887</div>
<div id="t131" class="t" style="left:257.60px;top:116.75px;font-family:'Liberation Mono',monospace;font-size:7.5px;color:#1e1e1e;letter-spacing:-0.19px;">01/01/2010</div>
<div id="t132" class="t" style="left:338.00px;top:116.75px;font-family:'Liberation Mono',monospace;font-size:7.5px;color:#1e1e1e;letter-spacing:-0.19px;">671</div>
<div id="t133" class="t" style="left:368.50px;top:116.75px;font-family:'Liberation Mono',monospace;font-size:7.5px;color:#1e1e1e;letter-spacing:-0.19px;">Mngr</div>
<div id="t134" class="t" style="left:438.08px;top:116.75px;font-family:'Liberation Mono',monospace;font-size:7.5px;color:#1e1e1e;letter-spacing:-0.19px;">3</div>
<div id="t135" class="t" style="left:447.00px;top:116.75px;font-family:'Liberation Mono',monospace;font-size:7.5px;color:#1e1e1e;letter-spacing:-0.19px;">USA</div>
<div id="t136" class="t" style="left:42.38px;top:127.75px;font-family:'Liberation Mono',monospace;font-size:7.5px;color:#1e1e1e;letter-spacing:-0.19px;">24</div>
<div id="t137" class="t" style="left:54.80px;top:127.75px;font-family:'Liberation Mono',monospace;font-size:7.5px;color:#1e1e1e;letter-spacing:-0.19px;">Pete</div>
<div id="t138" class="t" style="left:129.80px;top:127.75px;font-family:'Liberation Mono',monospace;font-size:7.5px;color:#1e1e1e;letter-spacing:-0.19px;">Fisher</div>
<div id="t139" class="t" style="left:218.80px;top:127.75px;font-family:'Liberation Mono',monospace;font-size:7.5px;color:#1e1e1e;letter-spacing:-0.19px;">888</div>
<div id="t140" class="t" style="left:257.40px;top:127.75px;font-family:'Liberation Mono',monospace;font-size:7.5px;color:#1e1e1e;letter-spacing:-0.19px;">12/09/2010</div>
<div id="t141" class="t" style="left:338.00px;top:127.75px;font-family:'Liberation Mono',monospace;font-size:7.5px;color:#1e1e1e;letter-spacing:-0.19px;">671</div>
<div id="t142" class="t" style="left:368.50px;top:127.75px;font-family:'Liberation Mono',monospace;font-size:7.5px;color:#1e1e1e;letter-spacing:-0.19px;">Eng</div>
<div id="t143" class="t" style="left:438.08px;top:127.75px;font-family:'Liberation Mono',monospace;font-size:7.5px;color:#1e1e1e;letter-spacing:-0.19px;">3</div>
<div id="t144" class="t" style="left:447.00px;top:127.75px;font-family:'Liberation Mono',monospace;font-size:7.5px;color:#1e1e1e;letter-spacing:-0.19px;">USA</div>
<div id="t145" class="t" style="left:42.38px;top:139.75px;font-family:'Liberation Mono',monospace;font-size:7.5px;color:#1e1e1e;letter-spacing:-0.19px;">28</div>
<div id="t146" class="t" style="left:54.80px;top:139.75px;font-family:'Liberation Mono',monospace;font-size:7.5px;color:#1e1e1e;letter-spacing:-0.19px;">Ann</div>
<div id="t147" class="t" style="left:129.80px;top:139.75px;font-family:'Liberation Mono',monospace;font-size:7.5px;color:#1e1e1e;letter-spacing:-0.19px;">Bennet</div>
<div id="t148" class="t" style="left:218.80px;top:139.75px;font-family:'Liberation Mono',monospace;font-size:7.5px;color:#1e1e1e;letter-spacing:-0.19px;">5</div>
<div id="t149" class="t" style="left:257.60px;top:139.75px;font-family:'Liberation Mono',monospace;font-size:7.5px;color:#1e1e1e;letter-spacing:-0.19px;">01/02/2011</div>
<div id="t150" class="t" style="left:338.00px;top:139.75px;font-family:'Liberation Mono',monospace;font-size:7.5px;color:#1e1e1e;letter-spacing:-0.19px;">120</div>
<div id="t151" class="t" style="left:368.50px;top:139.75px;font-family:'Liberation Mono',monospace;font-size:7.5px;color:#1e1e1e;letter-spacing:-0.19px;">Admn</div>
<div id="t152" class="t" style="left:438.08px;top:139.75px;font-family:'Liberation Mono',monospace;font-size:7.5px;color:#1e1e1e;letter-spacing:-0.19px;">5</div>
<div id="t153" class="t" style="left:447.00px;top:139.75px;font-family:'Liberation Mono',monospace;font-size:7.5px;color:#1e1e1e;letter-spacing:-0.19px;">England</div>
<div id="t154" class="t" style="left:42.38px;top:150.75px;font-family:'Liberation Mono',monospace;font-size:7.5px;color:#1e1e1e;letter-spacing:-0.19px;">29</div>
<div id="t155" class="t" style="left:54.80px;top:150.75px;font-family:'Liberation Mono',monospace;font-size:7.5px;color:#1e1e1e;letter-spacing:-0.19px;">Roger</div>
<div id="t156" class="t" style="left:129.80px;top:150.75px;font-family:'Liberation Mono',monospace;font-size:7.5px;color:#1e1e1e;letter-spacing:-0.19px;">De Souza</div>
<div id="t157" class="t" style="left:218.80px;top:150.75px;font-family:'Liberation Mono',monospace;font-size:7.5px;color:#1e1e1e;letter-spacing:-0.19px;">288</div>
<div id="t158" class="t" style="left:257.40px;top:150.75px;font-family:'Liberation Mono',monospace;font-size:7.5px;color:#1e1e1e;letter-spacing:-0.19px;">18/06/2011</div>
<div id="t159" class="t" style="left:338.00px;top:150.75px;font-family:'Liberation Mono',monospace;font-size:7.5px;color:#1e1e1e;letter-spacing:-0.19px;">623</div>
<div id="t160" class="t" style="left:368.50px;top:150.75px;font-family:'Liberation Mono',monospace;font-size:7.5px;color:#1e1e1e;letter-spacing:-0.19px;">Eng</div>
<div id="t161" class="t" style="left:438.08px;top:150.75px;font-family:'Liberation Mono',monospace;font-size:7.5px;color:#1e1e1e;letter-spacing:-0.19px;">3</div>
<div id="t162" class="t" style="left:447.00px;top:150.75px;font-family:'Liberation Mono',monospace;font-size:7.5px;color:#1e1e1e;letter-spacing:-0.19px;">USA</div>
<div id="t163" class="t" style="left:42.38px;top:161.75px;font-family:'Liberation Mono',monospace;font-size:7.5px;color:#1e1e1e;letter-spacing:-0.19px;">34</div>
<div id="t164" class="t" style="left:53.90px;top:161.75px;font-family:'Liberation Mono',monospace;font-size:7.5px;color:#1e1e1e;letter-spacing:-0.19px;">Janet</div>
<div id="t165" class="t" style="left:129.80px;top:161.75px;font-family:'Liberation Mono',monospace;font-size:7.5px;color:#1e1e1e;letter-spacing:-0.19px;">Baldwin</div>
<div id="t166" class="t" style="left:218.80px;top:161.75px;font-family:'Liberation Mono',monospace;font-size:7.5px;color:#1e1e1e;letter-spacing:-0.19px;">2</div>
<div id="t167" class="t" style="left:257.40px;top:161.75px;font-family:'Liberation Mono',monospace;font-size:7.5px;color:#1e1e1e;letter-spacing:-0.19px;">10/03/2012</div>
<div id="t168" class="t" style="left:338.00px;top:161.75px;font-family:'Liberation Mono',monospace;font-size:7.5px;color:#1e1e1e;letter-spacing:-0.19px;">110</div>
<div id="t169" class="t" style="left:368.50px;top:161.75px;font-family:'Liberation Mono',monospace;font-size:7.5px;color:#1e1e1e;letter-spacing:-0.19px;">Sales</div>
<div id="t170" class="t" style="left:438.08px;top:161.75px;font-family:'Liberation Mono',monospace;font-size:7.5px;color:#1e1e1e;letter-spacing:-0.19px;">3</div>
<div id="t171" class="t" style="left:447.00px;top:161.75px;font-family:'Liberation Mono',monospace;font-size:7.5px;color:#1e1e1e;letter-spacing:-0.19px;">USA</div>
<svg style="left:1.9000000000000057px;top:12.800000000000011px" width="4.2" height="6" viewBox="0 0 4.2 6"><path d="M0 0L4.2 3L0 6Z" fill="#000"/></svg>
</div>
<div style="left:596.00px;top:193.50px;width:9.20px;height:170.00px;background:#f0f0f0"></div>
<div style="left:596.80px;top:203.50px;width:7.20px;height:53.00px;background:#cdcdcd"></div>
<svg style="left:596px;top:193.5px" width="9.2" height="8" viewBox="0 0 9.2 8"><path d="M2.6 5.6L4.6 3.5L6.6 5.6" fill="none" stroke="#111" stroke-width="1.1"/></svg>
<div style="left:123.50px;top:363.00px;width:473.00px;height:11.20px;background:#f0f0f0"></div>
<div style="left:133.00px;top:364.60px;width:9.20px;height:8.00px;background:#cdcdcd"></div>
<svg style="left:123.5px;top:363px" width="9" height="11" viewBox="0 0 9 11"><path d="M5 3.5L3 5.5L5 7.5" fill="none" stroke="#222" stroke-width="0.9"/></svg>
<div style="left:19.00px;top:377.50px;width:589.00px;height:11.00px;background:#f0f0f0"></div>
<div id="t172" class="t" style="left:18.80px;top:382.25px;font-family:'Liberation Sans',sans-serif;font-size:6.8px;color:#111;;transform:scaleX(0.9652);transform-origin:0 0;">...\InterBase\gds_db\examples\database\employee.gdb</div>
<div style="left:614.00px;top:272.00px;width:31.00px;height:6.50px;background:#4a4a4a"></div>
<div style="left:640.00px;top:272.00px;width:6.00px;height:6.50px;background:#2a2a2a"></div>
<div style="left:645.00px;top:272.00px;width:11.00px;height:223.50px;background:#000"></div>
<div style="left:176.00px;top:488.50px;width:480.00px;height:7.00px;background:#000"></div>
<div style="left:176.00px;top:493.00px;width:208.50px;height:2.50px;background:#2e2e2e"></div>
<div style="left:176.00px;top:393.00px;width:3.00px;height:95.50px;background:#c6c6c6"></div>
<div style="left:179.00px;top:393.00px;width:1.20px;height:95.50px;background:#000"></div>
<div style="left:180.00px;top:278.50px;width:465.00px;height:210.00px;background:#f8f8f8"></div>
<div style="left:180.00px;top:278.50px;width:465.00px;height:0.80px;background:#e9e9e9"></div>
<div class="code" style="left:190.3px;top:290.95px;width:454px;height:199px;overflow:hidden;font-size:10.2px;letter-spacing:-0.330px"><span class="k">CREATE TABLE</span> Job
  (
     job_code         JOBCODE <span class="k">NOT NULL</span>,
     job_grade        JOBGRADE <span class="k">NOT NULL</span>,
     job_country      COUNTRYNAME <span class="k">NOT NULL</span>,
     job_title        <span class="g">VARCHAR</span>(25) <span class="k">NOT NULL</span>,
     min_salary       SALARY <span class="k">NOT NULL</span>,
     max_salary       SALARY <span class="k">NOT NULL</span>,
     job_requirement  <span class="g">BLOB</span> SUB_TYPE 1,
     language_req     <span class="g">VARCHAR</span>(15)[5],
     <span class="k">CONSTRAINT</span> pkjob <span class="k">PRIMARY KEY</span> (job_code, job_grade, job_country),
     <span class="k">CONSTRAINT</span> fkjob <span class="k">FOREIGN KEY</span> (job_country) <span class="k">REFERENCES</span> country (country),
     <span class="k">CHECK</span> (min_salary &lt; max_salary)
  )</div>
<div style="left:656.00px;top:384.00px;width:24.00px;height:183.00px;background:#000"></div>
<div style="left:384.50px;top:561.80px;width:295.50px;height:5.70px;background:#000"></div>
<div style="left:385.00px;top:489.00px;width:1.10px;height:75.00px;background:#000"></div>
<div style="left:386.00px;top:391.50px;width:284.00px;height:170.50px;background:#f9f9f9"></div>
<div style="left:386.00px;top:391.50px;width:284.00px;height:0.80px;background:#e6e6e6"></div>
<div class="code" style="left:396.3px;top:403.95px;width:273px;height:159px;overflow:hidden;font-size:10.2px;letter-spacing:-0.330px"><span class="k">CREATE VIEW</span> phone_list
<span class="k">AS</span>
  <span class="k">SELECT</span> emp_no,
         first_name,
         last_name,
         phone_ext,
         <span class="k">location</span>,
         phone_no
  <span class="k">FROM</span>   employee,
         department
  <span class="k">WHERE</span>  employee.dept_no = department.dept_no</div>
</body></html>
